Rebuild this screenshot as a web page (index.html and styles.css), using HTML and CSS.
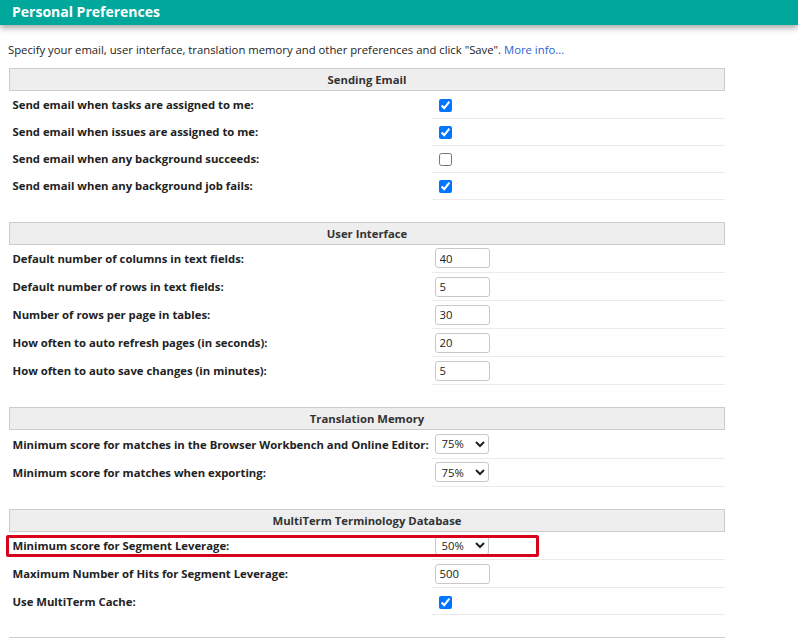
FILE: index.html
```html
<!DOCTYPE html>
<html>
<head>
    <meta charset="UTF-8" />
    <title>Personal Preferences</title>
    <link rel="stylesheet" href="styles.css">
</head>
<body>
    <div class="titulo">Personal Preferences</div>
    <div class="conteudo">
        <p class="intro">Specify your email, user interface, translation memory and other preferences and click "Save". <a href="#">More info...</a></p>

        <table class="secao">
            <tr><th colspan="2">Sending Email</th></tr>
            <tr class="linha-check">
                <td class="rotulo">Send email when tasks are assigned to me:</td>
                <td class="valor"><input type="checkbox" checked></td>
            </tr>
            <tr class="linha-check">
                <td class="rotulo">Send email when issues are assigned to me:</td>
                <td class="valor"><input type="checkbox" checked></td>
            </tr>
            <tr class="linha-check">
                <td class="rotulo">Send email when any background succeeds:</td>
                <td class="valor"><input type="checkbox"></td>
            </tr>
            <tr class="linha-check">
                <td class="rotulo">Send email when any background job fails:</td>
                <td class="valor"><input type="checkbox" checked></td>
            </tr>
        </table>

        <table class="secao">
            <tr><th colspan="2">User Interface</th></tr>
            <tr>
                <td class="rotulo">Default number of columns in text fields:</td>
                <td class="valor"><input type="text" class="campo" value="40"></td>
            </tr>
            <tr>
                <td class="rotulo">Default number of rows in text fields:</td>
                <td class="valor"><input type="text" class="campo" value="5"></td>
            </tr>
            <tr>
                <td class="rotulo">Number of rows per page in tables:</td>
                <td class="valor"><input type="text" class="campo" value="30"></td>
            </tr>
            <tr>
                <td class="rotulo">How often to auto refresh pages (in seconds):</td>
                <td class="valor"><input type="text" class="campo" value="20"></td>
            </tr>
            <tr>
                <td class="rotulo">How often to auto save changes (in minutes):</td>
                <td class="valor"><input type="text" class="campo" value="5"></td>
            </tr>
        </table>

        <table class="secao">
            <tr><th colspan="2">Translation Memory</th></tr>
            <tr>
                <td class="rotulo">Minimum score for matches in the Browser Workbench and Online Editor:</td>
                <td class="valor"><select class="lista"><option>75%</option></select></td>
            </tr>
            <tr>
                <td class="rotulo">Minimum score for matches when exporting:</td>
                <td class="valor"><select class="lista"><option>75%</option></select></td>
            </tr>
        </table>

        <table class="secao">
            <tr><th colspan="2">MultiTerm Terminology Database</th></tr>
            <tr>
                <td class="rotulo destaque-celula">Minimum score for Segment Leverage:<span class="destaque"></span></td>
                <td class="valor"><select class="lista"><option>50%</option></select></td>
            </tr>
            <tr>
                <td class="rotulo">Maximum Number of Hits for Segment Leverage:</td>
                <td class="valor"><input type="text" class="campo" value="500"></td>
            </tr>
            <tr class="linha-check">
                <td class="rotulo">Use MultiTerm Cache:</td>
                <td class="valor"><input type="checkbox" checked></td>
            </tr>
        </table>

        <div class="proxima"></div>
    </div>
</body>
</html>
```

FILE: styles.css
```css
body {
    margin: 0;
    background-color: white;
    font-family: "Open Sans", Arial, sans-serif;
    color: #222;
}

.titulo {
    height: 25px;
    line-height: 24px;
    padding-left: 12px;
    background-color: #00a89c;
    color: white;
    font-size: 14px;
    font-weight: bold;
    box-shadow: 0 3px 6px rgba(0, 0, 0, 0.35);
}

.conteudo {
    padding: 0 8px;
}

.intro {
    margin: 16px 0 9px 0;
    font-size: 11.3px;
    line-height: 18px;
}

.intro a {
    color: #2a62d2;
    text-decoration: none;
}

.secao {
    width: 716px;
    margin-left: 1px;
    margin-bottom: 22px;
    border-collapse: collapse;
    font-size: 11.3px;
}

.secao th {
    height: 21px;
    padding: 0;
    background-color: #eeeeee;
    border: 1px solid #cccccc;
    font-weight: bold;
    color: #333;
    text-align: center;
}

.secao td {
    padding: 0;
}

.rotulo {
    width: 419px;
    padding-left: 3px !important;
    font-weight: bold;
    white-space: nowrap;
    height: 28px;
}

.linha-check .rotulo {
    height: 27px;
}

.valor {
    border-bottom: 1px solid #ebebeb;
    padding-left: 3px !important;
}

.valor input[type="checkbox"] {
    width: 13px;
    height: 13px;
    margin: 0 0 0 4px;
    vertical-align: middle;
}

.campo {
    box-sizing: border-box;
    width: 55px;
    height: 20px;
    padding: 0 4px;
    border: 1px solid #c8c8c8;
    border-radius: 3px;
    font-family: "Open Sans", Arial, sans-serif;
    font-size: 11.3px;
    color: #222;
    vertical-align: middle;
}

.lista {
    box-sizing: border-box;
    width: 54px;
    height: 20px;
    padding: 0 2px;
    border: 1px solid #c8c8c8;
    border-radius: 3px;
    background-color: white;
    font-family: "Open Sans", Arial, sans-serif;
    font-size: 11.3px;
    color: #222;
    vertical-align: middle;
}

.destaque-celula {
    position: relative;
}

.destaque {
    position: absolute;
    left: -4px;
    top: 3px;
    width: 527px;
    height: 16px;
    border: 3px solid #d9021c;
    border-radius: 2px;
}

.proxima {
    width: 716px;
    margin-left: 1px;
    border-top: 1px solid #cccccc;
}
```
